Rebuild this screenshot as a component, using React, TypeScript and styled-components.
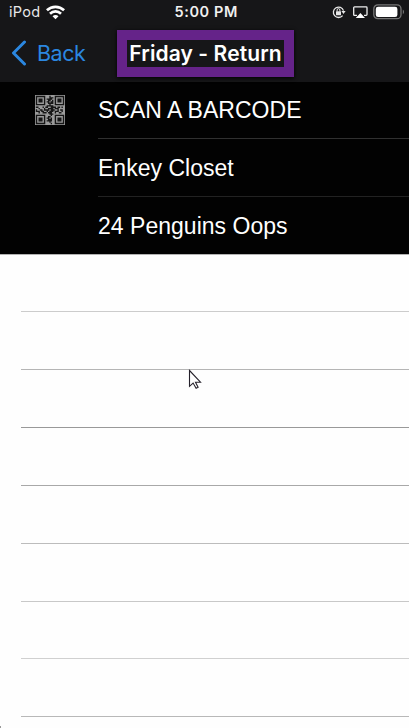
import React from "react";
import styled, { createGlobalStyle } from "styled-components";

const GlobalStyle = createGlobalStyle`
  * { box-sizing: border-box; }
  html, body { margin: 0; background: #fff; overflow: hidden; }
`;

const Screen = styled.main`
  position: relative;
  width: 409px;
  height: 728px;
  overflow: hidden;
  background: #fefefe;
  color: #fff;
  font-family: Inter, sans-serif;
`;

const Header = styled.header`
  height: 82px;
  background: #161618;
`;

const StatusBar = styled.div`
  display: grid;
  grid-template-columns: 1fr 64px 1fr;
  align-items: center;
  height: 24px;
`;

const StatusGroup = styled.div<{ $end?: boolean }>`
  display: flex;
  align-items: center;
  justify-content: ${(p) => (p.$end ? "flex-end" : "flex-start")};
  padding: ${(p) => (p.$end ? "0 4px 0 0" : "0 0 0 9px")};
  svg { display: block; flex: none; }
`;

const Carrier = styled.span`
  width: 37px;
  font-size: 14.5px;
  line-height: 24px;
  letter-spacing: 0.25px;
  color: #e8e8e8;
  white-space: nowrap;
`;

const Clock = styled.span`
  padding-left: 2px;
  font-size: 14.5px;
  line-height: 24px;
  font-weight: 600;
  letter-spacing: 0.6px;
  color: #f0f0f0;
  white-space: nowrap;
`;

const NavBar = styled.nav`
  display: flex;
  align-items: flex-start;
  height: 58px;
  padding: 6px 0 0 11px;
`;

const BackButton = styled.button`
  display: flex;
  align-items: center;
  width: 106px;
  height: 46px;
  padding: 0;
  border: 0;
  background: none;
  color: #2b87e0;
  font-family: inherit;
  font-size: 21.5px;
  letter-spacing: -0.45px;
  svg { display: block; margin-right: 10px; }
`;

const TitleBox = styled.h1`
  display: flex;
  align-items: center;
  justify-content: center;
  width: 177px;
  height: 47px;
  margin: 0;
  border: 10px solid #652389;
  box-shadow: 0 1px 4px #000;
  font-size: 21px;
  line-height: 27px;
  font-weight: 600;
  letter-spacing: 0.1px;
  white-space: nowrap;
`;

const List = styled.ul`
  margin: 0;
  padding: 0;
  list-style: none;
`;

const Row = styled.li<{ $height: number; $last?: boolean }>`
  display: flex;
  height: ${(p) => p.$height}px;
  background: #020202;
  border-bottom: ${(p) => (p.$last ? "1px solid #b2b2b2" : "0")};
`;

const Thumb = styled.div`
  width: 98px;
  padding: 13px 0 0 35px;
  svg { display: block; }
`;

const Label = styled.div<{ $rule?: string; $top: number }>`
  flex: 1;
  padding-top: ${(p) => p.$top}px;
  border-bottom: ${(p) => (p.$rule ? `1px solid ${p.$rule}` : "0")};
  font-family: "Liberation Sans", sans-serif;
  font-size: 23px;
  line-height: 28px;
  letter-spacing: 0.02px;
  white-space: nowrap;
`;

const EmptyRow = styled.li<{ $height: number; $tone: string }>`
  height: ${(p) => p.$height}px;
  margin-left: 21px;
  border-bottom: 1px solid ${(p) => p.$tone};
`;

const Pointer = styled.svg`
  position: absolute;
  left: 188px;
  top: 369px;
`;

const CornerMark = styled.span`
  position: absolute;
  left: 0;
  bottom: 0;
  width: 1px;
  height: 2px;
  background: #999;
`;

const Wifi = () => (
  <svg width="19" height="15" viewBox="0 0 19 15" fill="none" stroke="#fff" strokeWidth="2.7">
    <path d="M.9 5.3C5.8.6 13.2.6 18.1 5.3" />
    <path d="M4 8.7c3.2-3 7.8-3 11 0" />
    <path d="M6.5 11.3c1.8-1.6 4.2-1.6 6 0L9.5 14.3z" fill="#fff" stroke="none" />
  </svg>
);

const RotationLock = () => (
  <svg width="14" height="14" viewBox="0 0 14 14" fill="none" stroke="#e8e8e8" strokeWidth="1.3">
    <path d="M10.6 10.6A5.2 5.2 0 1 1 11.5 5.6" />
    <path d="M9.4 6h4.2l-2.1 3z" fill="#e8e8e8" stroke="none" />
    <rect x="4" y="6.3" width="5" height="3.9" rx=".5" fill="#e8e8e8" stroke="none" />
    <path d="M5.1 6.5V5a1.4 1.4 0 0 1 2.8 0v1.5" strokeWidth="1" />
  </svg>
);

const AirPlay = () => (
  <svg width="15" height="13" viewBox="0 0 15 13" fill="none" stroke="#eee" strokeWidth="1.3">
    <path d="M4 9.4H1.5a.8.8 0 0 1-.8-.8V1.7a.8.8 0 0 1 .8-.8h11.7a.8.8 0 0 1 .8.8v6.9a.8.8 0 0 1-.8.8H11" />
    <path d="M7.4 7l4.6 5H2.8z" fill="#fff" stroke="none" />
  </svg>
);

const Battery = () => (
  <svg width="32" height="16" viewBox="0 0 32 16">
    <rect x=".8" y=".9" width="27.2" height="13.8" rx="4" fill="none" stroke="#777" strokeWidth="1.3" />
    <rect x="2.8" y="2.8" width="21.6" height="10.2" rx="2.3" fill="#fff" />
    <path d="M29.8 5.4c1.6.8 1.6 4 0 4.8z" fill="#777" />
  </svg>
);

const IconSlot = styled.span<{ $width: number }>`
  display: flex;
  width: ${(p) => p.$width}px;
`;

const qrRows = [
  "111111100010001111111",
  "100000100011101000001",
  "101110101111001011101",
  "101110100110101011101",
  "101110101101101011101",
  "100000100111101000001",
  "111111100010001111111",
  "000000001111100000000",
  "110001011001111011010",
  "001000100111101110000",
  "100110111101110010110",
  "111011001011101110010",
  "001001110111001001100",
  "000000000011100000000",
  "111111100001001111111",
  "100000100110001000001",
  "101110101101001011101",
  "101110100111001011101",
  "101110101111001011101",
  "100000100010001000001",
  "111111100001001111111",
];

const qrPath = qrRows
  .flatMap((row, y) => [...row].map((bit, x) => (bit === "1" ? `M${x + 0.6} ${y + 0.6}h1v1h-1z` : "")))
  .join("");

const QrCode = () => (
  <svg width="30" height="30" viewBox="0 0 22.2 22.2">
    <rect width="22.2" height="22.2" fill="#9a9a9a" />
    <path d={qrPath} fill="#161616" />
  </svg>
);

const items = [
  { text: "SCAN A BARCODE", height: 57, rule: "#303030", top: 14, qr: true },
  { text: "Enkey Closet", height: 58, rule: "#222", top: 15, qr: false },
  { text: "24 Penguins Oops", height: 58, rule: undefined, top: 15, qr: false },
];

const emptyRows = [
  { height: 57, tone: "#ccc" },
  { height: 58, tone: "#b5b5b5" },
  { height: 58, tone: "#999" },
  { height: 58, tone: "#a8a8a8" },
  { height: 58, tone: "#bcbcbc" },
  { height: 58, tone: "#c8c8c8" },
  { height: 57, tone: "#d0d0d0" },
  { height: 58, tone: "#b8b8b8" },
];

export default function App() {
  return (
    <Screen>
      <GlobalStyle />
      <Header>
        <StatusBar>
          <StatusGroup>
            <Carrier>iPod</Carrier>
            <Wifi />
          </StatusGroup>
          <Clock>5:00 PM</Clock>
          <StatusGroup $end>
            <IconSlot $width={21}><RotationLock /></IconSlot>
            <IconSlot $width={20}><AirPlay /></IconSlot>
            <Battery />
          </StatusGroup>
        </StatusBar>
        <NavBar>
          <BackButton>
            <svg width="16" height="26" viewBox="0 0 16 26" fill="none" stroke="#2b87e0" strokeWidth="3" strokeLinecap="round" strokeLinejoin="round">
              <path d="M13.5 2L2.5 13l11 11" />
            </svg>
            Back
          </BackButton>
          <TitleBox>Friday - Return</TitleBox>
        </NavBar>
      </Header>
      <List>
        {items.map((item, i) => (
          <Row key={item.text} $height={item.height} $last={i === items.length - 1}>
            <Thumb>{item.qr && <QrCode />}</Thumb>
            <Label $rule={item.rule} $top={item.top}>{item.text}</Label>
          </Row>
        ))}
        {emptyRows.map((row, i) => (
          <EmptyRow key={i} $height={row.height} $tone={row.tone} />
        ))}
      </List>
      <Pointer width="15" height="22" viewBox="0 0 15 22">
        <path d="M1.5 1.5v15.8l3.6-3.3 3 5.3 2-1-2.6-5.1h5z" fill="#fff" stroke="#24202a" strokeWidth="1.1" />
      </Pointer>
      <CornerMark />
    </Screen>
  );
}
